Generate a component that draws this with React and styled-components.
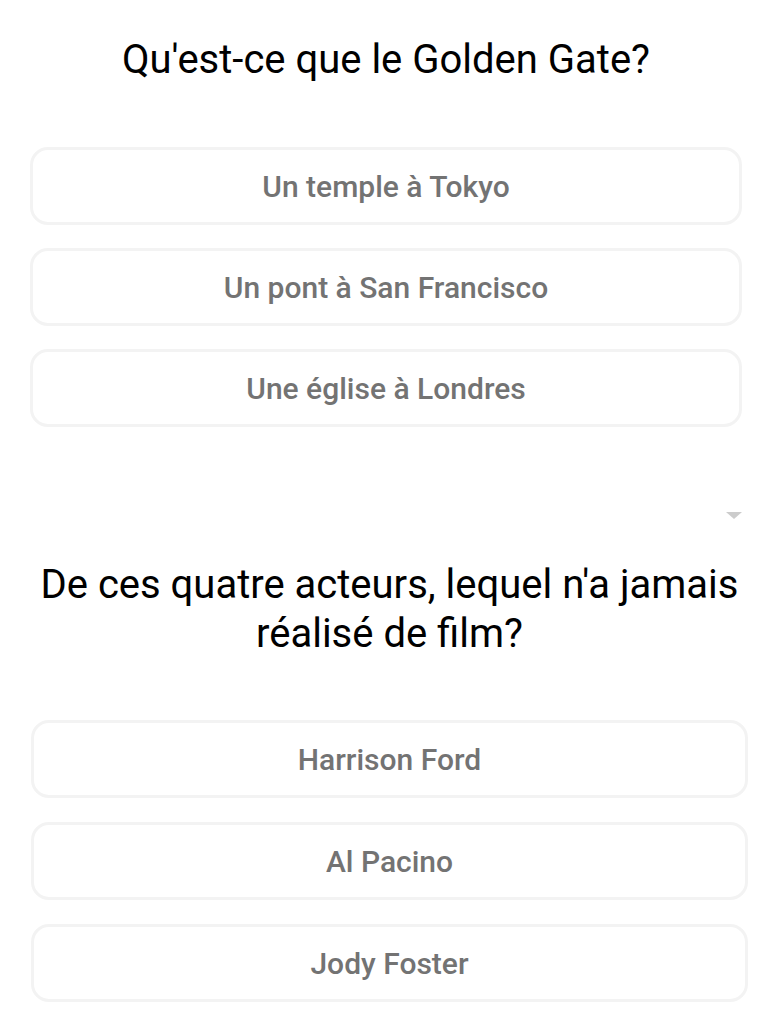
import React from 'react';
import styled, { createGlobalStyle } from 'styled-components';

const GlobalStyle = createGlobalStyle`
    html, body {
        margin: 0;
        padding: 0;
        background: #ffffff;
        font-family: Roboto, "Noto Sans", "Liberation Sans", sans-serif;
    }
`;

const Page = styled.div`
    display: flex;
    flex-direction: column;
    width: 768px;
    height: 1024px;
    overflow: hidden;
    background: #ffffff;
`;

const Block = styled.section`
    display: flex;
    flex-direction: column;
    width: ${(p) => p.width}px;
    margin-left: ${(p) => p.left}px;
    padding-top: ${(p) => p.top}px;
`;

const Question = styled.h2`
    margin: 0;
    font-size: 40px;
    font-weight: 400;
    line-height: 49px;
    color: #000000;
    text-align: center;
`;

const Options = styled.div`
    display: flex;
    flex-direction: column;
    gap: ${(p) => p.gap}px;
    margin-top: ${(p) => p.offset}px;
`;

const Option = styled.button`
    display: flex;
    align-items: center;
    justify-content: center;
    box-sizing: border-box;
    flex-shrink: 0;
    height: 78px;
    width: 100%;
    padding: 0;
    background: #ffffff;
    border: 3px solid #f3f3f3;
    border-radius: 18px;
    font-family: inherit;
    font-size: 30px;
    font-weight: 500;
    color: #737373;
    cursor: pointer;
`;

const ArrowRow = styled.div`
    display: flex;
    justify-content: flex-end;
    width: 742px;
    margin-top: 85px;
`;

const Caret = styled.span`
    width: 0;
    height: 0;
    border-left: 8px solid transparent;
    border-right: 8px solid transparent;
    border-top: 7px solid #cccccc;
`;

const quizzes = [
    {
        question: "Qu'est-ce que le Golden Gate?",
        options: ['Un temple à Tokyo', 'Un pont à San Francisco', 'Une église à Londres'],
    },
    {
        question: "De ces quatre acteurs, lequel n'a jamais réalisé de film?",
        options: ['Harrison Ford', 'Al Pacino', 'Jody Foster', ''],
    },
];

const App = () => {
    const [first, second] = quizzes;
    return (
        <Page>
            <GlobalStyle />
            <Block width={712} left={30} top={35}>
                <Question>{first.question}</Question>
                <Options gap={23} offset={63}>
                    {first.options.map((o, i) => (
                        <Option key={i}>{o}</Option>
                    ))}
                </Options>
            </Block>
            <ArrowRow>
                <Caret />
            </ArrowRow>
            <Block width={717} left={31} top={41}>
                <Question>{second.question}</Question>
                <Options gap={24} offset={62}>
                    {second.options.map((o, i) => (
                        <Option key={i}>{o}</Option>
                    ))}
                </Options>
            </Block>
        </Page>
    );
};

export default App;
